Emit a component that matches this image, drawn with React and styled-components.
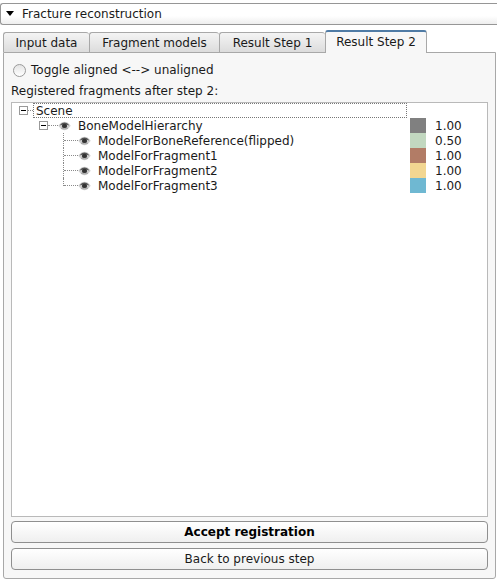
import styled, { createGlobalStyle } from 'styled-components';

const ROWS = [
    { name: 'BoneModelHierarchy', depth: 1, color: '#808080', opacity: '1.00' },
    { name: 'ModelForBoneReference(flipped)', depth: 2, color: '#c2d8c0', opacity: '0.50' },
    { name: 'ModelForFragment1', depth: 2, color: '#b27c66', opacity: '1.00' },
    { name: 'ModelForFragment2', depth: 2, color: '#f2d691', opacity: '1.00' },
    { name: 'ModelForFragment3', depth: 2, color: '#6fb8d2', opacity: '1.00', last: true },
];

const TABS = ['Input data', 'Fragment models', 'Result Step 1', 'Result Step 2'];

function Eye() {
    return (
        <EyeIcon viewBox="0 0 13 10">
            <path d="M0.3 4.8 C2.5 1.6 4.5 0.8 6.5 0.8 C8.5 0.8 10.5 1.6 12.7 4.8 C10.5 8 8.5 9.2 6.5 9.2 C4.5 9.2 2.5 8 0.3 4.8 Z" fill="#d0d0d0" />
            <path d="M1.6 4.4 C3.4 2.2 5 1.6 6.5 1.6 C8 1.6 9.6 2.2 11.4 4.4 C9.6 3.7 8 3.4 6.5 3.4 C5 3.4 3.4 3.7 1.6 4.4 Z" fill="#555" />
            <ellipse cx="6.5" cy="4.9" rx="2.6" ry="2.2" fill="#333" />
            <path d="M3 7.1 C5 8.1 8 8.1 10 7.1" fill="none" stroke="#9a9a9a" strokeWidth="0.9" />
        </EyeIcon>
    );
}

function Expander() {
    return (
        <ExpanderBox>
            <ExpanderDash />
        </ExpanderBox>
    );
}

export default function App() {
    return (
        <>
            <GlobalStyle />
            <Page>
                <Header>
                    <Arrow />
                    <span>Fracture reconstruction</span>
                </Header>
                <TabBar>
                    {TABS.map((tab, i) => (
                        <Tab key={tab} $active={i === 3} $width={[86, 130, 106, 102][i]}>
                            {tab}
                        </Tab>
                    ))}
                </TabBar>
                <Panel>
                    <RadioRow>
                        <Radio />
                        <span>Toggle aligned &lt;--&gt; unaligned</span>
                    </RadioRow>
                    <Label>Registered fragments after step 2:</Label>
                    <Tree>
                        <SceneRow>
                            <Expander />
                            <SceneStub />
                            <SceneName>Scene</SceneName>
                        </SceneRow>
                        {ROWS.map((row) => (
                            <Row key={row.name}>
                                <RowName $depth={row.depth}>
                                    {row.depth === 1 ? (
                                        <>
                                            <Expander />
                                            <Stub />
                                        </>
                                    ) : (
                                        <Branch $last={row.last} />
                                    )}
                                    <Eye />
                                    <Name>{row.name}</Name>
                                </RowName>
                                <Swatch $color={row.color} />
                                <Opacity>{row.opacity}</Opacity>
                            </Row>
                        ))}
                    </Tree>
                    <Button $bold>Accept registration</Button>
                    <Button>Back to previous step</Button>
                </Panel>
            </Page>
        </>
    );
}

const GlobalStyle = createGlobalStyle`
    html, body {
        margin: 0;
        padding: 0;
        background-color: #fff;
    }
    * {
        box-sizing: border-box;
    }
`;

const Page = styled.div`
    width: 497px;
    height: 580px;
    padding-top: 3px;
    overflow: hidden;
    font-family: "DejaVu Sans", sans-serif;
    font-size: 12px;
    color: #1a1a1a;
    background-color: #fff;
`;

const Header = styled.div`
    height: 22px;
    display: flex;
    align-items: center;
    padding-left: 5px;
    border: 1px solid #969696;
    border-right: none;
    border-radius: 3px 0 0 3px;
    background: linear-gradient(#fff 60%, #eeeeee);
`;

const Arrow = styled.span`
    width: 0;
    height: 0;
    margin: 0 8px 2px 0;
    border-left: 4px solid transparent;
    border-right: 4px solid transparent;
    border-top: 5px solid #000;
`;

const TabBar = styled.div`
    height: 27px;
    margin: 0 0 0 3px;
    display: flex;
    align-items: flex-end;
`;

const Tab = styled.div`
    width: ${(props) => props.$width}px;
    height: ${(props) => (props.$active ? '23px' : '20px')};
    display: flex;
    align-items: center;
    justify-content: center;
    padding-bottom: ${(props) => (props.$active ? '2px' : '0')};
    border: 1px solid #a8a8a8;
    border-right-width: ${(props) => (props.$active ? '1px' : '0')};
    border-top: ${(props) => (props.$active ? '2px solid #4f7ba5' : '1px solid #a8a8a8')};
    border-bottom: none;
    border-radius: 3px 3px 0 0;
    background: ${(props) => (props.$active ? '#f7f7f7' : 'linear-gradient(#f4f4f4, #dcdcdc)')};
    margin-bottom: ${(props) => (props.$active ? '-1px' : '0')};
    position: relative;
    z-index: ${(props) => (props.$active ? 1 : 0)};
`;

const Panel = styled.div`
    width: 493px;
    height: 527px;
    margin-left: 3px;
    padding: 0 7px;
    border: 1px solid #a8a8a8;
    border-radius: 0 0 3px 3px;
    background-color: #f7f7f7;
`;

const RadioRow = styled.div`
    height: 18px;
    margin-top: 8px;
    display: flex;
    align-items: center;
    padding-left: 2px;
`;

const Radio = styled.span`
    width: 13px;
    height: 13px;
    margin-right: 5px;
    border: 1px solid #9a9a9a;
    border-radius: 50%;
    background: linear-gradient(#e4e4e4, #fff);
`;

const Label = styled.div`
    height: 15px;
    margin-top: 5px;
    line-height: 15px;
`;

const Tree = styled.div`
    width: 477px;
    height: 415px;
    margin-top: 3px;
    padding-left: 7px;
    border: 1px solid #b9b9b9;
    background-color: #fff;
`;

const SceneRow = styled.div`
    height: 15px;
    display: flex;
    align-items: center;
`;

const ExpanderBox = styled.span`
    width: 9px;
    height: 9px;
    flex: none;
    display: flex;
    align-items: center;
    justify-content: center;
    border: 1px solid #999;
    background-color: #fff;
`;

const ExpanderDash = styled.span`
    width: 5px;
    height: 1px;
    background-color: #000;
`;

const SceneStub = styled.span`
    width: 5px;
    flex: none;
    border-top: 1px dotted #8a8a8a;
`;

const SceneName = styled.span`
    width: 374px;
    height: 15px;
    padding-left: 2px;
    line-height: 15px;
    border: 1px dotted #777;
`;

const Row = styled.div`
    height: 15px;
    display: flex;
    align-items: center;
`;

const RowName = styled.div`
    width: 391px;
    height: 15px;
    flex: none;
    display: flex;
    align-items: center;
    padding-left: ${(props) => (props.$depth === 1 ? '20px' : '44px')};
`;

const Stub = styled.span`
    width: 10px;
    flex: none;
    border-top: 1px dotted #8a8a8a;
`;

const Branch = styled.span`
    width: 15px;
    height: ${(props) => (props.$last ? '8px' : '15px')};
    align-self: flex-start;
    flex: none;
    position: relative;
    border-left: 1px dotted #8a8a8a;

    &::after {
        content: '';
        position: absolute;
        left: 0;
        top: 7px;
        width: 14px;
        border-top: 1px dotted #8a8a8a;
    }
`;

const EyeIcon = styled.svg`
    width: 13px;
    height: 10px;
    flex: none;
`;

const Name = styled.span`
    margin-left: 7px;
    white-space: nowrap;
`;

const Swatch = styled.span`
    width: 16px;
    height: 15px;
    flex: none;
    background-color: ${(props) => props.$color};
`;

const Opacity = styled.span`
    margin-left: 9px;
`;

const Button = styled.div`
    width: 477px;
    height: 22px;
    margin-top: ${(props) => (props.$bold ? '4px' : '5px')};
    display: flex;
    align-items: center;
    justify-content: center;
    font-weight: ${(props) => (props.$bold ? 'bold' : 'normal')};
    color: ${(props) => (props.$bold ? '#000' : '#1a1a1a')};
    border: 1px solid #8f8f8f;
    border-radius: 4px;
    background: linear-gradient(#fff, #efefef);
`;
